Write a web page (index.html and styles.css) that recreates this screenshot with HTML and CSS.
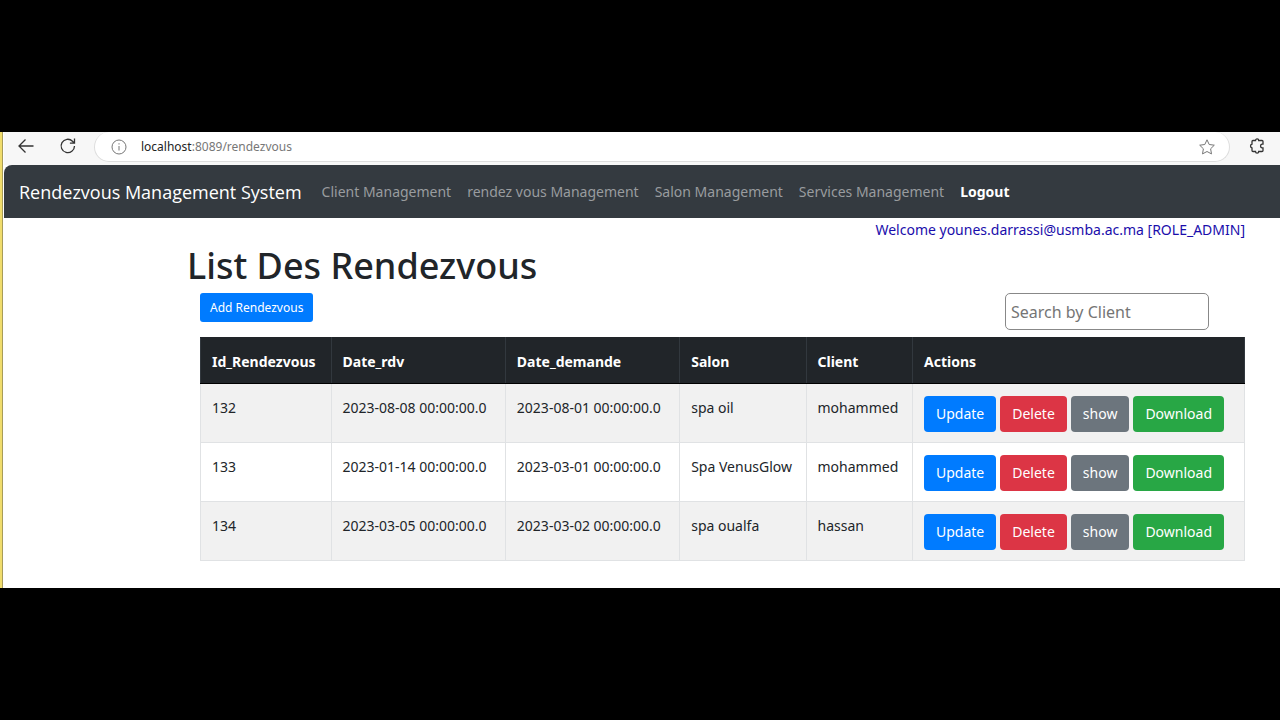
FILE: index.html
```
<!DOCTYPE html>
<html lang="en">
  <head>
    <meta charset="UTF-8" />
    <meta name="viewport" content="width=device-width, initial-scale=1.0" />
    <title>List Des Rendezvous</title>
    <link rel="stylesheet" href="styles.css">
  </head>
  <body>
    <div class="window">
      <div class="toolbar">
        <button class="tool" type="button" aria-label="Back">
          <svg width="18" height="18" viewBox="0 0 18 18"><path d="M16.5 9H2M8.5 2.5L2 9l6.500 6.500" /></svg>
        </button>
        <button class="tool" type="button" aria-label="Refresh">
          <svg width="18" height="18" viewBox="0 0 18 18"><path d="M15.500 9a6.700 6.700 0 1 1-2-4.800L15 5.800M15.500 1.500v4.600h-4.600" /></svg>
        </button>
        <div class="address">
          <svg class="info" width="16" height="16" viewBox="0 0 16 16"><circle cx="8" cy="8" r="7" /><path d="M8 7v4.500M8 4.200v1.300" /></svg>
          <span class="url"><span class="host">localhost</span>:8089/rendezvous</span>
          <svg class="star" width="18" height="18" viewBox="0 0 18 18"><path d="M9 1.800l2.200 4.700 5.100.7-3.700 3.600.9 5.100L9 13.500l-4.500 2.400.9-5.100-3.700-3.600 5.100-.7z" /></svg>
        </div>
        <button class="tool extensions" type="button" aria-label="Extensions">
          <svg width="18" height="18" viewBox="0 0 18 18"><path d="M5 3.500h2.500a1.600 1.600 0 0 1 3.200 0H14a1 1 0 0 1 1 1v2.700h-1a1.900 1.900 0 0 0 0 3.700h1v2.600a1 1 0 0 1-1 1h-3.300a1.600 1.600 0 0 1-3.200 0H5a1 1 0 0 1-1-1v-2.600a1.900 1.900 0 0 1 0-3.700V4.500a1 1 0 0 1 1-1z" /></svg>
        </button>
      </div>

      <nav class="navbar">
        <a class="navbar-brand" href="#">Rendezvous Management System</a>
        <a class="nav-link" href="#">Client Management</a>
        <a class="nav-link" href="#">rendez vous Management</a>
        <a class="nav-link" href="#">Salon Management</a>
        <a class="nav-link" href="#">Services Management</a>
        <a class="nav-link logout" href="#">Logout</a>
      </nav>

      <main class="container">
        <div class="welcome">Welcome younes.darrassi@usmba.ac.ma [ROLE_ADMIN]</div>
        <h1>List Des Rendezvous</h1>
        <div class="actions-bar">
          <button class="btn btn-sm btn-primary" type="button">Add Rendezvous</button>
          <input class="search" type="text" id="search" placeholder="Search by Client" aria-label="Search by Client" />
        </div>
        <table class="table">
          <colgroup>
            <col class="col-id" />
            <col class="col-date" />
            <col class="col-date" />
            <col class="col-salon" />
            <col class="col-client" />
            <col />
          </colgroup>
          <thead>
            <tr>
              <th>Id_Rendezvous</th>
              <th>Date_rdv</th>
              <th>Date_demande</th>
              <th>Salon</th>
              <th>Client</th>
              <th>Actions</th>
            </tr>
          </thead>
          <tbody>
            <tr>
              <td>132</td>
              <td>2023-08-08 00:00:00.0</td>
              <td>2023-08-01 00:00:00.0</td>
              <td>spa oil</td>
              <td>mohammed</td>
              <td>
                <div class="row-actions">
                  <button class="btn btn-primary" type="button">Update</button>
                  <button class="btn btn-danger" type="button">Delete</button>
                  <button class="btn btn-secondary" type="button">show</button>
                  <button class="btn btn-success" type="button">Download</button>
                </div>
              </td>
            </tr>
            <tr>
              <td>133</td>
              <td>2023-01-14 00:00:00.0</td>
              <td>2023-03-01 00:00:00.0</td>
              <td>Spa VenusGlow</td>
              <td>mohammed</td>
              <td>
                <div class="row-actions">
                  <button class="btn btn-primary" type="button">Update</button>
                  <button class="btn btn-danger" type="button">Delete</button>
                  <button class="btn btn-secondary" type="button">show</button>
                  <button class="btn btn-success" type="button">Download</button>
                </div>
              </td>
            </tr>
            <tr>
              <td>134</td>
              <td>2023-03-05 00:00:00.0</td>
              <td>2023-03-02 00:00:00.0</td>
              <td>spa oualfa</td>
              <td>hassan</td>
              <td>
                <div class="row-actions">
                  <button class="btn btn-primary" type="button">Update</button>
                  <button class="btn btn-danger" type="button">Delete</button>
                  <button class="btn btn-secondary" type="button">show</button>
                  <button class="btn btn-success" type="button">Download</button>
                </div>
              </td>
            </tr>
          </tbody>
        </table>
      </main>
    </div>
  </body>
</html>
```
FILE: styles.css
```
* {
  box-sizing: border-box;
}
body {
  margin: 0;
  min-height: 100vh;
  display: flex;
  flex-direction: column;
  justify-content: center;
  background-color: #000;
  color: #212529;
  font-family: "Noto Sans", "Open Sans", sans-serif;
  font-size: 14px;
  line-height: 24px;
}
button,
input {
  font-family: inherit;
}

/* browser window */
.window {
  background-color: #fff;
  border-left: 2px solid #f0dc6c;
  box-shadow: inset 1px 0 #a89c58;
  padding-left: 2px;
}
.toolbar {
  display: flex;
  align-items: flex-start;
  height: 33px;
  padding-left: 13px;
  background-color: #f7f7f7;
}
.tool {
  display: flex;
  margin-right: 24px;
  padding: 5px 0;
  border: none;
  background: none;
}
.toolbar svg {
  fill: none;
  stroke: #333;
  stroke-width: 1.3;
  flex-shrink: 0;
}
.address {
  flex: 1;
  display: flex;
  align-items: center;
  height: 30px;
  margin-left: -7px;
  padding: 0 13px 0 16px;
  background-color: #fff;
  border: 1px solid #ddd;
  border-top: none;
  border-radius: 16px;
}
.toolbar .info,
.toolbar .star {
  stroke: #777;
  stroke-width: 1;
}
.url {
  flex: 1;
  margin-left: 14px;
  color: #777;
  font-size: 12px;
}
.host {
  color: #222;
}
.extensions {
  margin: 0 14px 0 18px;
}

/* navigation */
.navbar {
  display: flex;
  align-items: center;
  gap: 16px;
  padding: 13px 15px 12px;
  background-color: #343a40;
  border-top-left-radius: 8px;
}
.navbar a {
  color: #999c9f;
  text-decoration: none;
  white-space: nowrap;
}
.navbar .navbar-brand {
  margin-right: 4px;
  color: #fff;
  font-family: "Open Sans", sans-serif;
  font-size: 18px;
  line-height: 28px;
}
.navbar .logout {
  color: #fff;
  font-weight: bold;
}

/* page content */
.container {
  padding: 0 35px 27px 196px;
}
.welcome {
  text-align: right;
  color: #1a0dab;
}
h1 {
  margin: 0 0 4px -13px;
  font-size: 36px;
  font-weight: 500;
  line-height: 47px;
}
.actions-bar {
  display: flex;
  justify-content: space-between;
  align-items: flex-start;
  margin-bottom: 7px;
}
.search {
  width: 204px;
  height: 37px;
  margin-right: 36px;
  padding: 0 5px;
  border: 1px solid #888;
  border-radius: 5px;
  font-size: 16px;
}
.search::placeholder {
  color: #757575;
}
.btn {
  padding: 6px 12px;
  border: none;
  border-radius: 4px;
  color: #fff;
  font-size: 14px;
  line-height: 24px;
  cursor: pointer;
}
.btn-sm {
  padding: 4px 10px;
  border-radius: 3px;
  font-size: 12px;
  line-height: 21px;
}
.btn-primary {
  background-color: #007bff;
}
.btn-danger {
  background-color: #dc3545;
}
.btn-secondary {
  background-color: #6c757d;
}
.btn-success {
  background-color: #28a745;
}

/* table */
.table {
  width: 100%;
  table-layout: fixed;
  border-collapse: collapse;
}
.col-id {
  width: 12.5%;
}
.col-date {
  width: 16.7%;
}
.col-salon {
  width: 12.1%;
}
.col-client {
  width: 10.2%;
}
.table th,
.table td {
  padding: 12px 11px 10px;
  border: 1px solid #e0e2e4;
  text-align: left;
  vertical-align: top;
  white-space: nowrap;
}
.table thead th {
  padding-bottom: 9px;
  background-color: #212529;
  border-color: #32383e;
  border-top-color: #212529;
  border-bottom-color: #000;
  color: #fff;
}
.table tbody tr:nth-child(odd) {
  background-color: #f1f1f1;
}
.row-actions {
  display: flex;
  gap: 4px;
}
```
